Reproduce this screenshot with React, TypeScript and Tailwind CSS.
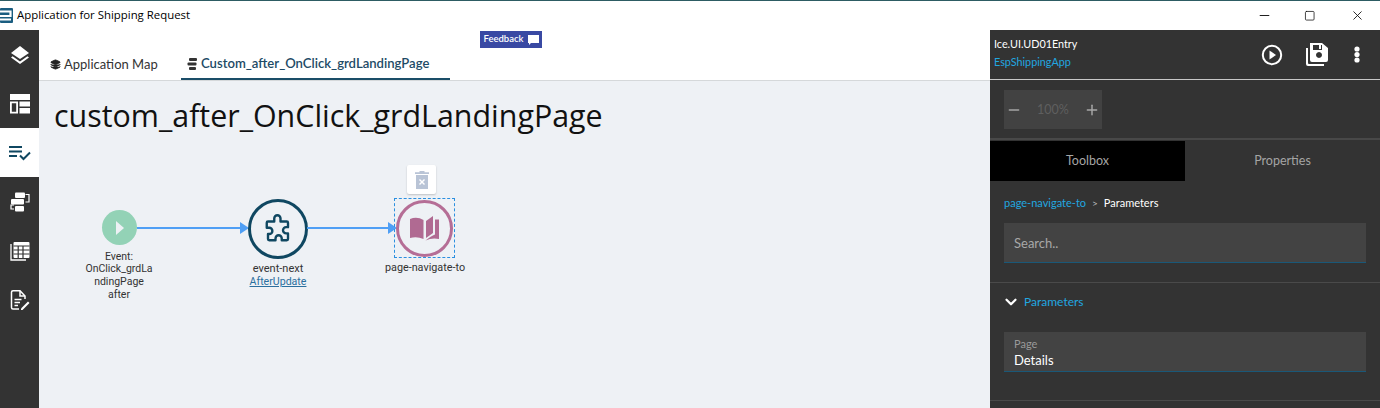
import React from 'react';
import { Layers, Minus, Plus, Square, X, ChevronDown } from 'lucide-react';

const sideItems = ['layers', 'layout', 'check', 'flow', 'table', 'edit'];

function SideIcon({ name }: { name: string }) {
  if (name === 'layers') {
    return (
      <svg width="20" height="20" viewBox="0 0 20 20" fill="white">
        <path d="M10 1 L19 8 L10 14 L1 8 Z" />
        <path d="M2.6 11.3 L1 12.5 L10 19 L19 12.5 L17.4 11.3 L10 16.5 Z" />
      </svg>
    );
  }
  if (name === 'layout') {
    return (
      <svg width="20" height="20" viewBox="0 0 20 20" fill="white">
        <path d="M0 0 H20 V6 H0 Z" />
        <path d="M0 7.5 H8 V19.5 H0 Z M1.8 9.3 V17.7 H6.2 V9.3 Z" fillRule="evenodd" />
        <path d="M9.5 7.5 H20 V12.5 H9.5 Z M9.5 14 H20 V19.5 H9.5 Z" />
      </svg>
    );
  }
  if (name === 'check') {
    return (
      <svg width="22" height="16" viewBox="0 0 22 16" fill="none" stroke="#0f4761" strokeWidth="1.9">
        <path d="M0 2 H13 M0 6.5 H13 M0 11 H8" />
        <path d="M11 10.5 L14.5 14 L21 7.5" strokeWidth="2" />
      </svg>
    );
  }
  if (name === 'flow') {
    return (
      <svg width="20" height="20" viewBox="0 0 20 20" fill="white">
        <rect x="5" y="0.5" width="10" height="5.5" rx="1" />
        <rect x="1" y="7" width="13" height="5.5" rx="1" />
        <rect x="5" y="14" width="9" height="5.5" rx="1" />
        <path d="M15.5 2.5 H19 V10 H15.5 M4 13 H1 V17 H4" fill="none" stroke="white" strokeWidth="1.2" />
      </svg>
    );
  }
  if (name === 'table') {
    return (
      <svg width="20" height="20" viewBox="0 0 20 20" fill="none">
        <path d="M1 3 V19 H16" stroke="white" strokeWidth="1.3" />
        <rect x="3.5" y="1" width="16" height="16" rx="1" fill="white" />
        <path d="M3.5 5 H19.5 M8.2 5 V17 M13 5 V17 M3.5 9 H19.5 M3.5 13 H19.5" stroke="#333333" strokeWidth="1.2" />
      </svg>
    );
  }
  return (
    <svg width="20" height="20" viewBox="0 0 20 20" fill="none" stroke="white" strokeWidth="1.5">
      <path d="M9 19 H3 Q1.5 19 1.5 17.5 V2 Q1.5 0.8 3 0.8 H10 L15 6 V9" />
      <path d="M10 1 V6 H15" />
      <path d="M4.5 9.5 H11.5 M4.5 12.5 H10 M4.5 15.5 H8" />
      <path d="M11 18.5 L18 11.5 L19.5 13 L12.5 20 H11 Z" fill="white" stroke="none" />
    </svg>
  );
}

function Arrow({ width }: { width: number }) {
  return (
    <svg width={width} height="14" viewBox={`0 0 ${width} 14`} className="block">
      <path d={`M0 7 H${width - 8}`} stroke="#4f9ff5" strokeWidth="2" />
      <path d={`M${width - 9} 1 L${width} 7 L${width - 9} 13 Z`} fill="#4f9ff5" />
    </svg>
  );
}

export default function App() {
  return (
    <div className="w-[1380px] h-[408px] overflow-hidden bg-white flex flex-col font-['Lato',sans-serif] border-t border-[#2d5c63]">
      <div className="h-[29px] shrink-0 flex items-center text-black">
        <svg width="13" height="15" viewBox="0 0 13 15" className="shrink-0 mt-[-1px]">
          <rect width="13" height="15" rx="1" fill="#1a5d80" />
          <path d="M0 3.5 H10.5 V8 H0 M0 11.5 H11" fill="none" stroke="white" strokeWidth="2.2" />
        </svg>
        <span className="ml-[4px] mt-[-2px] text-[11.4px] font-['Open_Sans',sans-serif] leading-none">Application for Shipping Request</span>
        <div className="ml-auto flex items-center text-[#111]">
          <Minus size={15} strokeWidth={1.5} className="mr-[32px]" />
          <Square size={11.5} strokeWidth={1.6} className="mr-[35px]" />
          <X size={15} strokeWidth={1.4} className="mr-[15px]" />
        </div>
      </div>

      <div className="flex-1 flex min-h-0">
        <div className="w-[39px] shrink-0 bg-[#333333] flex flex-col">
          {sideItems.map((s) => (
            <div key={s} className={`h-[49px] flex items-center justify-center ${s === 'check' ? 'bg-white' : ''}`}>
              <SideIcon name={s} />
            </div>
          ))}
        </div>

        <div className="flex-1 flex flex-col min-w-0">
          <div className="h-[51px] shrink-0 bg-white border-b border-[#d5d8da] flex items-end pl-[11px] relative">
            <div className="h-[32px] pt-[1px] flex items-center gap-[3px] text-[13px] text-[#333] w-[131px]">
              <Layers size={11} fill="#222" strokeWidth={2} className="text-[#222]" />
              Application Map
            </div>
            <div className="h-[32px] w-[269px] flex items-center gap-[3px] pl-[6px] pt-[2px] border-b-[2px] border-[#1a4d68] text-[13.1px] font-semibold text-[#1d4a66]">
              <svg width="11" height="12" viewBox="0 0 11 12" fill="#333">
                <rect x="2" y="0" width="8" height="3" rx="1" />
                <rect x="0.5" y="4.5" width="9" height="3" rx="1" />
                <rect x="2" y="9" width="7" height="3" rx="1" />
              </svg>
              Custom_after_OnClick_grdLandingPage
            </div>
            <div className="absolute left-[441px] top-[1px] h-[17px] w-[62px] bg-[#3949a3] flex items-center justify-center gap-[4px] text-[9.5px] font-semibold text-white">
              Feedback
              <svg width="11" height="10" viewBox="0 0 11 10" fill="white">
                <path d="M0 0 H11 V8 H3 L1 10 V8 H0 Z" />
              </svg>
            </div>
          </div>

          <div className="flex-1 bg-[#eef1f5] relative">
            <h1 className="pl-[15px] pt-[14px] text-[30.4px] leading-[42px] text-[#111] font-['Open_Sans',sans-serif]">
              custom_after_OnClick_grdLandingPage
            </h1>

            <div className="absolute left-[63px] top-[129px] w-[35px] h-[35px] rounded-full bg-[#93d2b6] flex items-center justify-center">
              <svg width="10" height="14" viewBox="0 0 10 14" fill="#eef1f5">
                <path d="M1 0 L9 7 L1 14 Z" />
              </svg>
            </div>
            <div className="absolute left-[98px] top-[140px]"><Arrow width={112} /></div>
            <div className="absolute left-[45px] top-[169.5px] w-[70px] text-center text-[10.5px] leading-[12.9px] text-[#333] font-['Roboto',sans-serif] break-all">
              Event:<br />OnClick_grdLa<br />ndingPage<br />after
            </div>

            <div className="absolute left-[209px] top-[118px] w-[60px] h-[60px] rounded-full border-[3px] border-[#0f4761] flex items-center justify-center">
              <svg width="30" height="30" viewBox="0 0 24 24" fill="none" stroke="#0f4761" strokeWidth="1.9" strokeLinejoin="round">
                <path d="M9 3.5 a2.5 2.5 0 0 1 5 0 V6 h5 a1 1 0 0 1 1 1 v3.5 h-1.5 a2.5 2.5 0 0 0 0 5 H20 V20 a1 1 0 0 1 -1 1 h-4 v-1.5 a2.5 2.5 0 0 0 -5 0 V21 H5 a1 1 0 0 1 -1 -1 v-4 h1 a2.5 2.5 0 0 0 0 -5 H3 V7 a1 1 0 0 1 1 -1 h5 Z" />
              </svg>
            </div>
            <div className="absolute left-[268px] top-[140px]"><Arrow width={90} /></div>
            <div className="absolute left-[194px] top-[181px] w-[90px] text-center text-[11px] leading-[13px] text-[#333] font-['Roboto',sans-serif]">
              event-next<br />
              <span className="underline text-[10.6px] text-[#2b6f9e]">AfterUpdate</span>
            </div>

            <div className="absolute left-[368px] top-[84px] w-[29px] h-[29px] bg-white rounded-[2px] shadow-[0_1px_2px_rgba(0,0,0,0.2)] flex items-center justify-center">
              <svg width="14" height="18" viewBox="0 0 14 18" fill="#b9c4d6">
                <path d="M4.5 0 H9.5 V1.2 H14 V3 H0 V1.2 H4.5 Z" />
                <path d="M1 4 H13 V18 H1 Z M5 8 L4 9 L6 11 L4 13 L5 14 L7 12 L9 14 L10 13 L8 11 L10 9 L9 8 L7 10 Z" fillRule="evenodd" />
              </svg>
            </div>
            <div className="absolute left-[355px] top-[117px] w-[61px] h-[60px] border border-dashed border-[#2a8fe0] flex items-center justify-center">
              <div className="w-[57px] h-[57px] rounded-full border-[3px] border-[#b56e96] flex items-center justify-center">
                <svg width="29" height="25" viewBox="0 0 29 25">
                  <path d="M0 3 Q7 0 13.5 4 V23 Q7 20 0 22 Z" fill="#b06a92" />
                  <path d="M16 5 L23 0 V17 L16 22 Z" fill="#b06a92" />
                  <path d="M25 3.5 H29 V23 Q22 21.5 15.5 24.5 Q21 20 25 18.5 Z" fill="#b06a92" />
                </svg>
              </div>
            </div>
            <div className="absolute left-[330px] top-[180px] w-[112px] text-center text-[10.8px] leading-[13px] text-[#333] font-['Roboto',sans-serif]">
              page-navigate-to
            </div>
          </div>
        </div>

        <div className="w-[390px] shrink-0 bg-[#333333] flex flex-col">
          <div className="h-[50px] shrink-0 border-b border-[#c8c8c8] flex items-center pl-[4px] pr-[20px] text-[10.8px]">
            <div className="flex flex-col gap-[4px] leading-[14px] mt-[-4px]">
              <span className="text-white">Ice.UI.UD01Entry</span>
              <span className="text-[#22a7e0]">EspShippingApp</span>
            </div>
            <div className="ml-auto flex items-center text-white">
              <svg width="22" height="22" viewBox="0 0 22 22" fill="none" stroke="white" strokeWidth="2" className="mr-[22px]">
                <circle cx="11" cy="11" r="9.2" />
                <path d="M8.5 6.5 L15 11 L8.5 15.5 Z" fill="white" stroke="none" />
              </svg>
              <svg width="23" height="23" viewBox="0 0 23 23" fill="white" className="mr-[26px]">
                <path d="M5 0 H17 L23 5 V17 Q23 19 21 19 H7 Q5 19 5 17 Z M8 2 V7 H17 V2 Z M14 2 V6 H16 V2 Z M14 9 a3 3 0 1 0 0.01 0 Z" fillRule="evenodd" />
                <path d="M1 5 H3 V20 Q3 21 4 21 H19 V23 H3 Q1 23 1 21 Z" />
              </svg>
              <svg width="6" height="17" viewBox="0 0 6 17" fill="white">
                <circle cx="3" cy="3" r="2.6" />
                <circle cx="3" cy="8.5" r="2.6" />
                <circle cx="3" cy="14" r="2.6" />
              </svg>
            </div>
          </div>

          <div className="h-[60px] shrink-0 border-b-[2px] border-[#484848] pt-[10px] pl-[14px]">
            <div className="w-[98px] h-[39px] bg-[#424242] flex items-center justify-between px-[2px]">
              <Minus size={16} strokeWidth={2.2} className="text-[#a5a5a5]" />
              <span className="text-[12.5px] pt-[2px] text-[#5f5f5f]">100%</span>
              <Plus size={16} strokeWidth={2.2} className="text-[#a8a8a8]" />
            </div>
          </div>

          <div className="h-[40px] shrink-0 flex text-[12.5px] mt-[1px]">
            <div className="w-[195px] bg-black text-[#a5a5a5] flex items-center justify-center">Toolbox</div>
            <div className="w-[195px] text-[#a5a5a5] flex items-center justify-center">Properties</div>
          </div>

          <div className="px-[14px] mt-[14px] text-[11px] leading-[16px] flex items-center">
            <span className="text-[#22a7e0]">page-navigate-to</span>
            <span className="text-[#bbb] mx-[6px] text-[10px]">&gt;</span>
            <span className="text-white">Parameters</span>
          </div>

          <div className="mx-[14px] mt-[12px] h-[40px] bg-[#434343] border-b border-[#1a5878] flex items-center pl-[10px] pt-[2px] text-[13px] text-[#a8a8a8]">
            Search..
          </div>

          <div className="mt-[19px] h-[50px] border-t border-[#4a4a4a] flex items-center pl-[12px] pb-[12px] text-[12px] text-[#22a7e0]">
            <ChevronDown size={18} strokeWidth={3} className="text-white mr-[4px]" />
            Parameters
          </div>

          <div className="mx-[14px] h-[40px] bg-[#434343] border-b border-[#1a5878] pl-[10px] pt-[5px] flex flex-col">
            <span className="text-[11px] leading-[13px] text-[#9a9a9a]">Page</span>
            <span className="text-[13px] leading-[16px] mt-[2px] text-white">Details</span>
          </div>

          <div className="mt-[28px] border-t border-[#4a4a4a]" />
        </div>
      </div>
    </div>
  );
}
